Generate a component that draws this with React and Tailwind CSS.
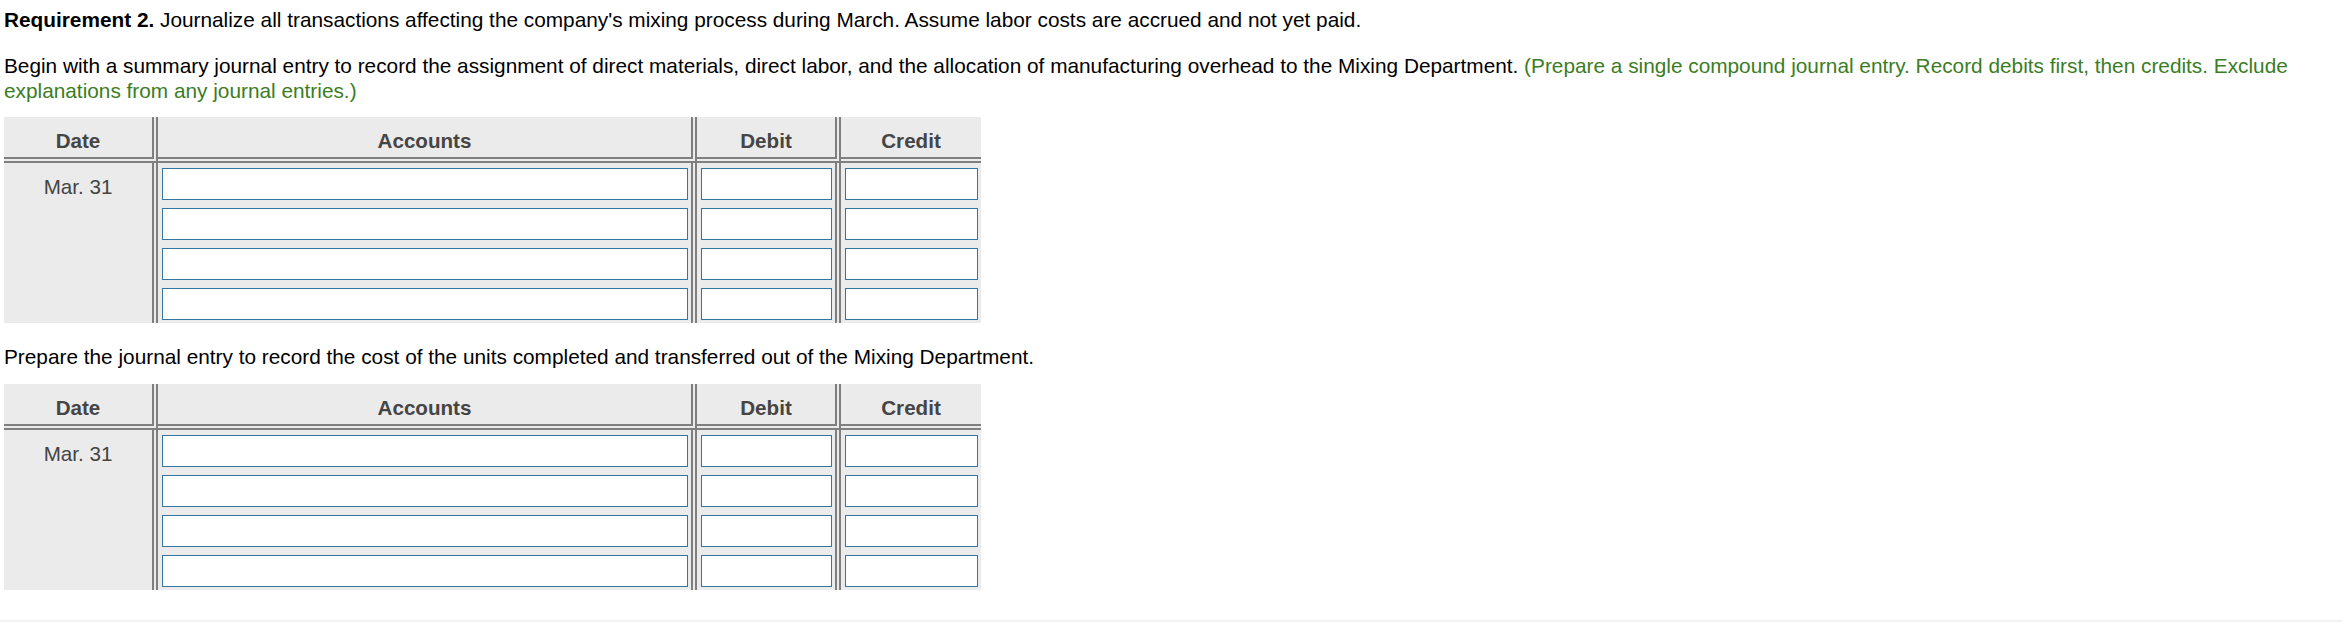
import React from 'react';

const Field = () => (
  <div className="h-[32px] w-full border border-[#33769e] bg-white" />
);

const Column = ({ last }) => (
  <div
    className={
      'flex flex-col gap-[8px] pl-[4px] pr-[3px] pt-[5px] pb-[3px] ' +
      (last ? '' : 'border-r-[6px] border-double border-[#7f7f7f]')
    }
  >
    <Field />
    <Field />
    <Field />
    <Field />
  </div>
);

const JournalTable = ({ className }) => (
  <div
    className={
      'grid w-[977px] grid-cols-[154px_539px_144px_140px] bg-[#ebebeb] text-[20.6px] leading-[23px] ' +
      className
    }
  >
    {/* header row */}
    <div className="flex h-[46px] items-center justify-center border-b-[6px] border-r-[6px] border-double border-[#7f7f7f] pt-[6px] font-bold text-[#454545]">
      Date
    </div>
    <div className="flex h-[46px] items-center justify-center border-b-[6px] border-r-[6px] border-double border-[#7f7f7f] pt-[6px] font-bold text-[#454545]">
      Accounts
    </div>
    <div className="flex h-[46px] items-center justify-center border-b-[6px] border-r-[6px] border-double border-[#7f7f7f] pt-[6px] font-bold text-[#454545]">
      Debit
    </div>
    <div className="flex h-[46px] items-center justify-center border-b-[6px] border-double border-[#7f7f7f] pt-[6px] font-bold text-[#454545]">
      Credit
    </div>

    {/* body */}
    <div className="border-r-[6px] border-double border-[#7f7f7f] pt-[12px] text-center text-[#444]">
      Mar. 31
    </div>
    <Column />
    <Column />
    <Column last />
  </div>
);

export default function App() {
  return (
    <div className="min-h-[622px] bg-white pl-[4px] pt-[7px] text-[20.8px] leading-[25px] text-black [font-family:'Liberation_Sans',Arial,sans-serif]">
      <p>
        <span className="font-bold">Requirement 2.</span> Journalize all transactions affecting the
        company's mixing process during March. Assume labor costs are accrued and not yet paid.
      </p>

      <p className="mt-[21px] pr-[20px]">
        Begin with a summary journal entry to record the assignment of direct materials, direct labor,
        and the allocation of manufacturing overhead to the Mixing Department.{' '}
        <span className="text-[#3b7d23]">
          (Prepare a single compound journal entry. Record debits first, then credits. Exclude
          explanations from any journal entries.)
        </span>
      </p>

      <JournalTable className="mt-[14px]" />

      <p className="mt-[21px]">
        Prepare the journal entry to record the cost of the units completed and transferred out of the
        Mixing Department.
      </p>

      <JournalTable className="mt-[15px]" />

      <div className="-ml-[4px] mt-[30px] h-[2px] bg-[#f2f2f2]" />
    </div>
  );
}
